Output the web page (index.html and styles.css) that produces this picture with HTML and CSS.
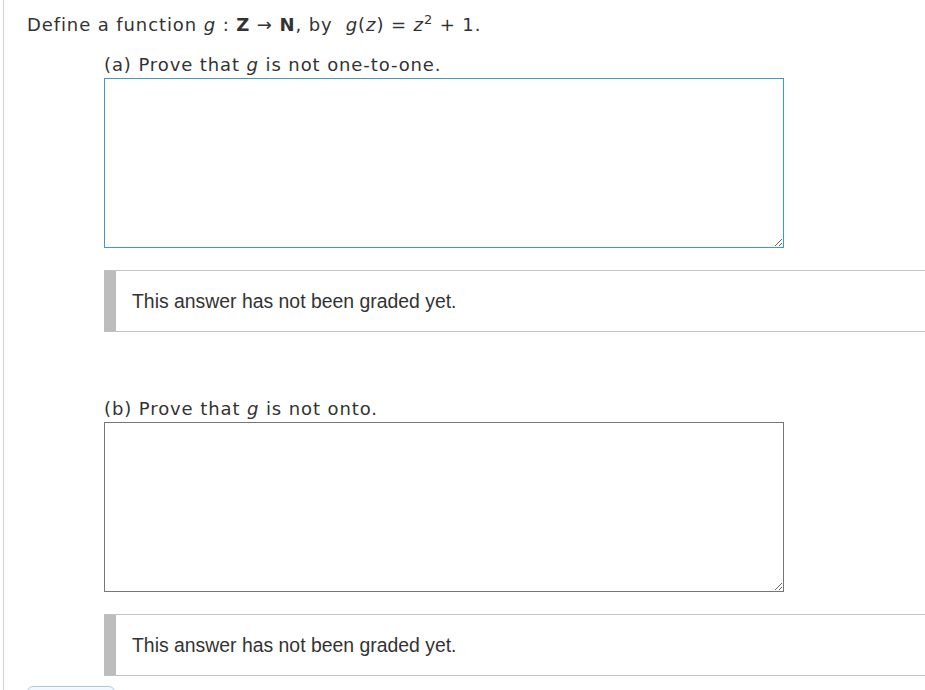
FILE: index.html
```html
<!DOCTYPE html>
<html lang="en">
<head>
  <meta charset="UTF-8" />
  <title>Question</title>
  <link rel="stylesheet" href="styles.css">
</head>
<body>

<div class="page">
  <p class="prompt">Define a function <i>g</i> : <b>Z</b> &rarr; <b>N</b>, by&nbsp; <i>g</i>(<i>z</i>) = <i>z</i><sup>2</sup> + 1.</p>

  <div class="part">
    <p class="part-label">(a) Prove that <i>g</i> is not one-to-one.</p>
    <textarea class="answer active"></textarea>
    <div class="grade">This answer has not been graded yet.</div>
  </div>

  <div class="part">
    <p class="part-label">(b) Prove that <i>g</i> is not onto.</p>
    <textarea class="answer"></textarea>
    <div class="grade">This answer has not been graded yet.</div>
  </div>

  <button class="submit" type="button">&nbsp;</button>
</div>

</body>
</html>
```

FILE: styles.css
```css
body {
  margin: 0;
  background: #fff;
  overflow: hidden;
}
.page {
  margin-left: 3px;
  border-left: 1px solid #d4d4d4;
  padding: 12px 0 0 23px;
  min-height: 700px;
  font-family: "DejaVu Sans", Verdana, sans-serif;
  font-size: 18px;
  letter-spacing: 0.9px;
  color: #333;
}
.prompt {
  margin: 0;
  line-height: 26px;
}
.prompt sup {
  font-size: 13px;
  line-height: 0;
}
.part {
  margin-left: 77px;
}
.part-label {
  margin: 0;
  padding-top: 14px;
  line-height: 26px;
}
.answer {
  display: block;
  box-sizing: border-box;
  width: 680px;
  height: 170px;
  margin: 0;
  border: 1px solid #767676;
  border-radius: 0;
  padding: 4px;
}
.answer.active {
  border-color: #3d9ad1;
}
.grade {
  margin-top: 22px;
  height: 60px;
  border-top: 1px solid #c4c4c4;
  border-bottom: 1px solid #c4c4c4;
  border-left: 12px solid #bdbdbd;
  padding-left: 16px;
  font-family: "Liberation Sans", Arial, sans-serif;
  font-size: 19.4px;
  letter-spacing: 0;
  line-height: 60px;
  color: #333;
  margin-right: -10px;
}
.part + .part {
  margin-top: 50px;
}
.submit {
  display: block;
  margin-top: 10px;
  width: 88px;
  height: 30px;
  border: 1px solid #a8c8ee;
  border-radius: 6px;
  background: linear-gradient(#f4f9ff, #d6e6fa);
}
```
